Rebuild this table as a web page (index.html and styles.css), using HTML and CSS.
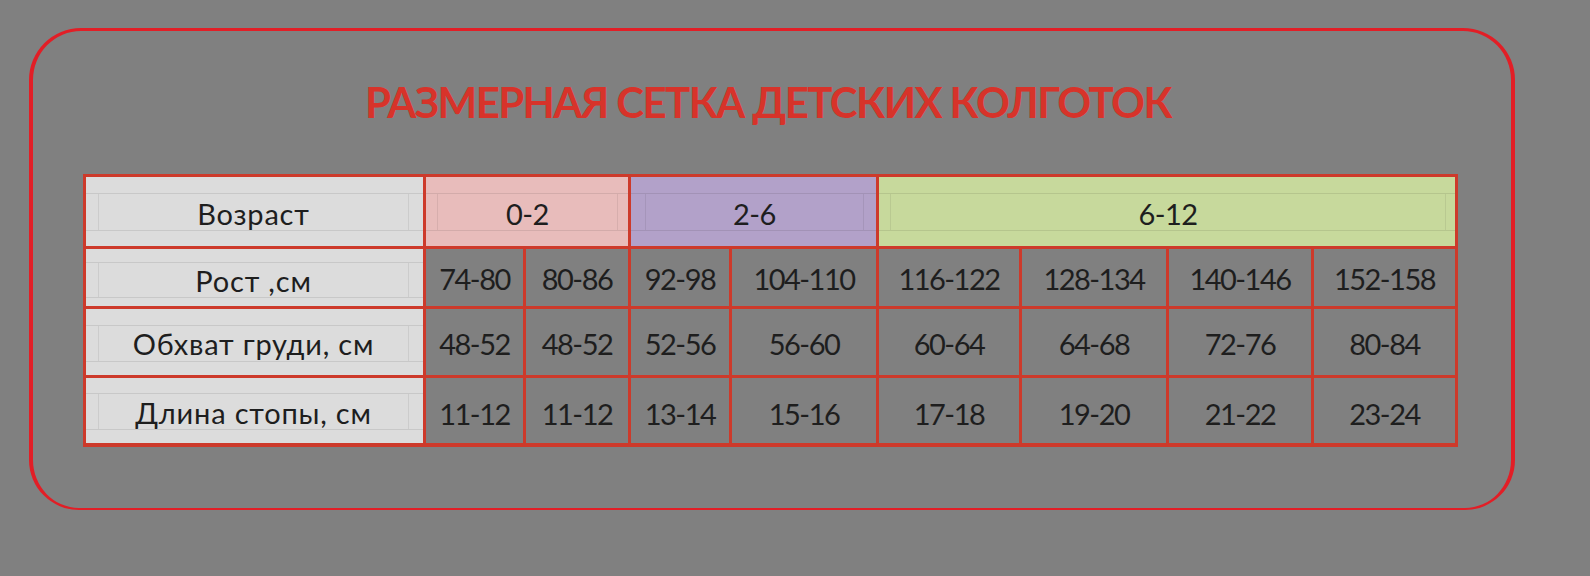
FILE: index.html
```html
<!DOCTYPE html>
<html lang="ru">
<head>
<meta charset="utf-8">
<title>Размерная сетка детских колготок</title>
<link rel="stylesheet" href="styles.css">
</head>
<body>
<div class="frame">
  <h1 class="title">РАЗМЕРНАЯ СЕТКА ДЕТСКИХ КОЛГОТОК</h1>
  <div class="grid">
    <div class="cell label r1"><div class="box b1"><div class="box-in">Возраст</div></div></div>
    <div class="cell age pink span2 r1"><div class="box b1 in-02"><div class="box-in">0-2</div></div></div>
    <div class="cell age lav span2 r1"><div class="box b1 in-26"><div class="box-in">2-6</div></div></div>
    <div class="cell age green span4 r1"><div class="box b1 in-612"><div class="box-in">6-12</div></div></div>

    <div class="cell label r2"><div class="box b2"><div class="box-in">Рост ,см</div></div></div>
    <div class="cell num r2">74-80</div>
    <div class="cell num r2">80-86</div>
    <div class="cell num r2">92-98</div>
    <div class="cell num r2">104-110</div>
    <div class="cell num r2">116-122</div>
    <div class="cell num r2">128-134</div>
    <div class="cell num r2">140-146</div>
    <div class="cell num r2">152-158</div>

    <div class="cell label r3"><div class="box b3"><div class="box-in">Обхват груди, см</div></div></div>
    <div class="cell num r3">48-52</div>
    <div class="cell num r3">48-52</div>
    <div class="cell num r3">52-56</div>
    <div class="cell num r3">56-60</div>
    <div class="cell num r3">60-64</div>
    <div class="cell num r3">64-68</div>
    <div class="cell num r3">72-76</div>
    <div class="cell num r3">80-84</div>

    <div class="cell label r4"><div class="box b4"><div class="box-in">Длина стопы, см</div></div></div>
    <div class="cell num r4">11-12</div>
    <div class="cell num r4">11-12</div>
    <div class="cell num r4">13-14</div>
    <div class="cell num r4">15-16</div>
    <div class="cell num r4">17-18</div>
    <div class="cell num r4">19-20</div>
    <div class="cell num r4">21-22</div>
    <div class="cell num r4">23-24</div>
  </div>
</div>
</body>
</html>
```
FILE: styles.css
```css
html, body {
  margin: 0;
  padding: 0;
  background: #808080;
}
body {
  width: 1590px;
  height: 576px;
  overflow: hidden;
  font-family: Lato, "Noto Sans", "DejaVu Sans", sans-serif;
}
.frame {
  box-sizing: border-box;
  margin: 28px 0 0 29px;
  width: 1486px;
  height: 482px;
  border: solid #e21e26;
  border-width: 3px 4px 2px 4px;
  border-radius: 52px 52px 50px 50px;
  padding-top: 50px;
}
.title {
  margin: 0;
  text-align: center;
  font-family: Lato, "Noto Sans", sans-serif;
  font-weight: 700;
  font-size: 42px;
  line-height: 42px;
  color: #d7332a;
  letter-spacing: -1.6px;
  padding-right: 8px;
}
.grid {
  margin: 51px 0 0 50px;
  width: 1375px;
  box-sizing: border-box;
  display: grid;
  grid-template-columns: 337px 97px 102px 98px 144px 140px 144px 142px 141px;
  grid-template-rows: 69px 57px 66px 65px;
  gap: 3px;
  padding: 3px 3px 4px 3px;
  background: #cd3a2b;
}
.cell {
  box-sizing: border-box;
  color: #1e1e1e;
  font-size: 29px;
  font-weight: 400;
  line-height: 1;
}
.num {
  background: #808080;
  display: flex;
  align-items: center;
  justify-content: center;
  letter-spacing: -1.5px;
}
.num.r2 { padding-top: 2px; }
.num.r3 { padding-top: 2px; }
.num.r4 { padding-top: 6px; }

.label {
  background: #dcdcdc;
  letter-spacing: 0.8px;
}
.age { letter-spacing: -0.5px; }
.pink { background: #e8bcbb; }
.lav { background: #b2a1c9; }
.green { background: #c7d99c; }
.span2 { grid-column: span 2; }
.span4 { grid-column: span 4; }

.box {
  box-sizing: border-box;
  border-top: 1px solid rgba(0, 0, 0, 0.09);
  border-bottom: 1px solid rgba(0, 0, 0, 0.09);
  padding: 0 14px 0 12px;
}
.box-in {
  box-sizing: border-box;
  height: 100%;
  border-left: 1px solid rgba(0, 0, 0, 0.07);
  border-right: 1px solid rgba(0, 0, 0, 0.07);
  display: flex;
  align-items: center;
  justify-content: center;
}
.b1 { margin-top: 16px; height: 38px; }
.b1 .box-in { padding-top: 3px; }
.b2 { margin-top: 13px; height: 36px; }
.b3 { margin-top: 16px; height: 37px; }
.b4 { margin-top: 15px; height: 37px; }
.b4 .box-in { padding-top: 2px; }
.in-02 { padding: 0 10px 0 11px; }
.in-26 { padding: 0 12px 0 14px; }
.in-612 { padding: 0 9px 0 11px; }
```
